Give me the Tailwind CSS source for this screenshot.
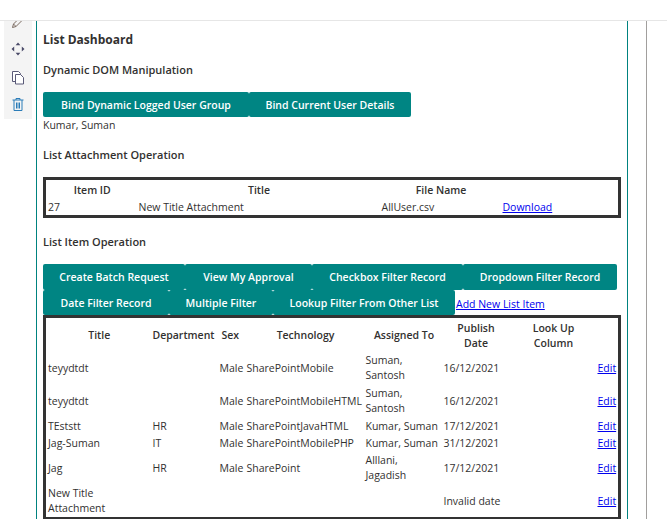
<!DOCTYPE html>
<html lang="en">
    <head>
        <meta charset="UTF-8">
        <meta name="viewport" content="width=device-width, initial-scale=1.0">
        <title>List Dashboard</title>
        <script src="https://cdn.jsdelivr.net/npm/@tailwindcss/browser@4"></script>
    </head>
    <body class="bg-white font-['Open_Sans',sans-serif] text-[10.5px] leading-[15px] text-[#323130] overflow-hidden">
        <div class="h-[21px] border-b border-[#e6e6e6]"></div>
        <div class="flex h-[498px] overflow-hidden">
            <!-- edit toolbar -->
            <div class="ml-[4px] w-[28px] h-[98px] bg-[#f4f4f4] flex flex-col items-center relative">
                <svg class="absolute top-[-6px] left-[7px] text-[#7a6a60]" width="14" height="14" viewBox="0 0 14 14" fill="none" stroke="currentColor" stroke-width="1"><path d="M1.5 12.5l1-3.5L10 1.5l2.5 2.5L5 11.5z"/><path d="M2.5 9l2.5 2.5"/></svg>
                <svg class="absolute top-[21px] left-[7px] text-[#4a4a68]" width="14" height="14" viewBox="0 0 14 14" fill="currentColor"><path d="M7 .5l2.4 2.7H4.6zM7 13.5l2.4-2.7H4.6zM.5 7l2.7-2.4v4.8zM13.5 7l-2.7-2.4v4.8z"/></svg>
                <svg class="absolute top-[49px] left-[7px] text-[#5a5a78]" width="14" height="15" viewBox="0 0 14 15" fill="#fff" stroke="currentColor" stroke-width="1"><path d="M1.5 1.5h6l2 2v8h-8z"/><path d="M4.5 4.5h5l3 3v6.5h-8z"/></svg>
                <svg class="absolute top-[76px] left-[7px] text-[#2b7cb8]" width="14" height="15" viewBox="0 0 14 15" fill="none" stroke="currentColor" stroke-width="1"><path d="M1.5 3h11M5 3V1.5h4V3M3 3v10.5h8V3M5.5 5.5v6M7 5.5v6M8.5 5.5v6"/></svg>
            </div>
            <!-- web part -->
            <div class="ml-[4px] w-[592px] border-x border-[#00827f] pl-[6px] pr-[5px] shrink-0">
                <h1 class="mt-[11px] text-[12px] leading-[16px] font-bold">List Dashboard</h1>
                <h2 class="mt-[14px] text-[11px] leading-[15px] font-semibold">Dynamic DOM Manipulation</h2>
                <div class="mt-[15px] flex">
                    <button class="h-[25px] w-[206px] pt-px bg-[#008583] text-white font-semibold rounded-[2px]">Bind Dynamic Logged User Group</button>
                    <button class="h-[25px] w-[162px] pt-px bg-[#008583] text-white font-semibold rounded-[2px]">Bind Current User Details</button>
                </div>
                <p class="mt-px">Kumar, Suman</p>
                <h2 class="mt-[14px] text-[11px] font-semibold">List Attachment Operation</h2>
                <table class="mt-[15px] w-[578px] border-[3px] border-[#333] table-fixed">
                    <thead>
                        <tr class="h-[21px] align-top">
                            <th class="w-[94px] pt-[3px] font-semibold">Item ID</th>
                            <th class="w-[241px] pt-[3px] font-semibold">Title</th>
                            <th class="w-[123px] pt-[3px] font-semibold">File Name</th>
                            <th class="font-semibold"></th>
                        </tr>
                    </thead>
                    <tbody>
                        <tr class="h-[17px]">
                            <td class="pl-[2px]">27</td>
                            <td>New Title Attachment</td>
                            <td class="pl-[2px]">AllUser.csv</td>
                            <td><a href="#" class="text-[#0000ee] underline">Download</a></td>
                        </tr>
                    </tbody>
                </table>
                <h2 class="mt-[16px] text-[11px] font-semibold">List Item Operation</h2>
                <div class="mt-[15px] w-[578px] flex flex-wrap">
                    <button class="h-[26px] w-[142px] pt-px bg-[#008583] text-white font-semibold rounded-[2px]">Create Batch Request</button>
                    <button class="h-[26px] w-[127px] pt-px bg-[#008583] text-white font-semibold rounded-[2px]">View My Approval</button>
                    <button class="h-[26px] w-[151px] pt-px bg-[#008583] text-white font-semibold rounded-[2px]">Checkbox Filter Record</button>
                    <button class="h-[26px] w-[154px] pt-px bg-[#008583] text-white font-semibold rounded-[2px]">Dropdown Filter Record</button>
                    <button class="h-[25px] w-[126px] pt-px bg-[#008583] text-white font-semibold rounded-[2px]">Date Filter Record</button>
                    <button class="h-[25px] w-[104px] pt-px bg-[#008583] text-white font-semibold rounded-[2px]">Multiple Filter</button>
                    <button class="h-[25px] w-[182px] pt-px bg-[#008583] text-white font-semibold rounded-[2px]">Lookup Filter From Other List</button>
                    <a href="#" class="ml-px h-[25px] leading-[28px] text-[#0000ee] underline">Add New List Item</a>
                </div>
                <table class="w-[578px] border-[3px] border-[#333] table-fixed">
                    <thead>
                        <tr class="h-[35px]">
                            <th class="w-[108px] pt-[2px] font-semibold">Title</th>
                            <th class="w-[67px] pt-[2px] font-semibold text-left whitespace-nowrap">Department</th>
                            <th class="w-[26px] pt-[2px] font-semibold text-left pl-[2px]">Sex</th>
                            <th class="w-[120px] pt-[2px] font-semibold">Technology</th>
                            <th class="w-[77px] pt-[2px] font-semibold whitespace-nowrap">Assigned To</th>
                            <th class="w-[67px] pt-[2px] font-semibold px-[14px]">Publish Date</th>
                            <th class="w-[88px] pt-[2px] font-semibold px-[20px]">Look Up Column</th>
                            <th class="font-semibold"></th>
                        </tr>
                    </thead>
                    <tbody>
                        <tr class="h-[33px]">
                            <td class="pl-[2px]">teyydtdt</td>
                            <td></td>
                            <td>Male</td>
                            <td class="pl-[1px]">SharePointMobile</td>
                            <td>Suman,<br>Santosh</td>
                            <td class="pl-[1px]">16/12/2021</td>
                            <td></td>
                            <td class="text-right pr-[2px]"><a href="#" class="text-[#0000ee] underline">Edit</a></td>
                        </tr>
                        <tr class="h-[33px]">
                            <td class="pl-[2px]">teyydtdt</td>
                            <td></td>
                            <td>Male</td>
                            <td class="pl-[1px]">SharePointMobileHTML</td>
                            <td>Suman,<br>Santosh</td>
                            <td class="pl-[1px]">16/12/2021</td>
                            <td></td>
                            <td class="text-right pr-[2px]"><a href="#" class="text-[#0000ee] underline">Edit</a></td>
                        </tr>
                        <tr class="h-[17px]">
                            <td class="pl-[2px]">TEststt</td>
                            <td>HR</td>
                            <td>Male</td>
                            <td class="pl-[1px]">SharePointJavaHTML</td>
                            <td class="whitespace-nowrap">Kumar, Suman</td>
                            <td class="pl-[1px]">17/12/2021</td>
                            <td></td>
                            <td class="text-right pr-[2px]"><a href="#" class="text-[#0000ee] underline">Edit</a></td>
                        </tr>
                        <tr class="h-[17px]">
                            <td class="pl-[2px]">Jag-Suman</td>
                            <td>IT</td>
                            <td>Male</td>
                            <td class="pl-[1px]">SharePointMobilePHP</td>
                            <td class="whitespace-nowrap">Kumar, Suman</td>
                            <td class="pl-[1px]">31/12/2021</td>
                            <td></td>
                            <td class="text-right pr-[2px]"><a href="#" class="text-[#0000ee] underline">Edit</a></td>
                        </tr>
                        <tr class="h-[33px]">
                            <td class="pl-[2px]">Jag</td>
                            <td>HR</td>
                            <td>Male</td>
                            <td class="pl-[1px]">SharePoint</td>
                            <td>Alllani,<br>Jagadish</td>
                            <td class="pl-[1px]">17/12/2021</td>
                            <td></td>
                            <td class="text-right pr-[2px]"><a href="#" class="text-[#0000ee] underline">Edit</a></td>
                        </tr>
                        <tr class="h-[34px]">
                            <td class="pl-[2px] pt-px">New Title Attachment</td>
                            <td></td>
                            <td></td>
                            <td></td>
                            <td></td>
                            <td class="pl-[1px] pt-px">Invalid date</td>
                            <td></td>
                            <td class="text-right pr-[2px] pt-px"><a href="#" class="text-[#0000ee] underline">Edit</a></td>
                        </tr>
                    </tbody>
                </table>
            </div>
            <div class="ml-[18px] w-px bg-[#a19f9d]"></div>
        </div>
    </body>
</html>
